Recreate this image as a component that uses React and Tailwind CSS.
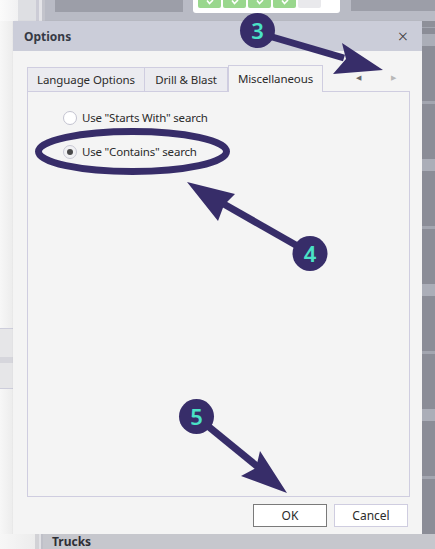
const ui = { fontFamily: '"Noto Sans", "Open Sans", sans-serif' };

function Check() {
  return (
    <svg width="10" height="6" viewBox="0 0 10 6">
      <path d="M2 0.5 L4.5 3.5 L8 0" fill="none" stroke="#fff" strokeWidth="1.6" />
    </svg>
  );
}

function Tile({ done }) {
  return (
    <div
      className={`flex h-[8px] w-[23px] items-start justify-center rounded-b-[2px] ${
        done ? 'bg-[#99d78d]' : 'bg-[#e9e9ec]'
      }`}
    >
      {done && <Check />}
    </div>
  );
}

function TopStrip() {
  return (
    <div className="flex h-[21px] shrink-0">
      <div className="w-[18px] bg-gradient-to-r from-[#fbfbfb] to-[#f1f1f2]" />
      <div className="w-[18px] bg-[#dedfe3]" />
      <div className="w-[3px] bg-[#ccccd6]" />
      <div className="w-[3px] bg-[#e4e4e8]" />
      <div className="w-[3px] bg-[#c3c4cc]" />
      <div className="flex flex-1 items-start bg-[#b9bbc5] pl-[10px]">
        <div className="h-[12px] w-[128px] bg-[#9c9ea8]" />
        <div className="ml-[10px] flex h-[13px] w-[147px] gap-[2px] rounded-b-[3px] bg-white pl-[5px]">
          <Tile done />
          <Tile done />
          <Tile done />
          <Tile done />
          <Tile />
        </div>
        <div className="ml-[11px] h-[11px] flex-1 bg-[#9c9ea8]" />
      </div>
    </div>
  );
}

function LeftStrip() {
  return (
    <div className="flex w-[13px] shrink-0 flex-col bg-gradient-to-r from-[#f7f7f7] to-[#ececec]">
      <div className="h-[307px]" />
      <div className="h-[1px] bg-[#cdcddb]" />
      <div className="h-[28px] bg-[#e6e6e8]" />
      <div className="h-[6px] bg-[#d6d6dc]" />
      <div className="h-[25px] bg-[#e6e6e8]" />
      <div className="h-[1px] bg-[#cdcddb]" />
    </div>
  );
}

function RightStrip() {
  const band = (k) => (
    <div key={k} className="flex flex-col">
      <div className="h-[12px] bg-[#abaeb8]" />
      <div className="h-[55px] bg-[#8b8d97]" />
      <div className="h-[3px] bg-[#a3a6b0]" />
      <div className="h-[55px] bg-[#8b8d97]" />
    </div>
  );
  return (
    <div className="flex w-[13px] shrink-0 flex-col overflow-hidden bg-[#8b8d97]">
      <div className="h-[57px] bg-[#8e9099]" />
      <div className="h-[3px] bg-[#a3a6b0]" />
      <div className="h-[55px] bg-[#8b8d97]" />
      {[0, 1, 2, 3].map(band)}
    </div>
  );
}

function Radio({ checked, label }) {
  return (
    <div className="flex items-center gap-[5px]">
      <span
        className={`flex h-[14px] w-[14px] items-center justify-center rounded-full border ${
          checked ? 'border-[#c9c9d4] bg-[#f1f1f3]' : 'border-[#c3c3d0] bg-white'
        }`}
      >
        {checked && <span className="h-[6px] w-[6px] rounded-full bg-[#4a4a4a]" />}
      </span>
      <span className="text-[11.5px] leading-none tracking-[-0.2px] text-[#2b2b2b]">{label}</span>
    </div>
  );
}

function Dialog() {
  const tab = 'flex items-center justify-center border border-b-0 border-[#cfcde0] text-[11.5px] tracking-[-0.1px] text-[#2b2b2b]';
  return (
    <div className="flex w-[409px] shrink-0 flex-col bg-[#f4f4f4] shadow-[1px_1px_2px_rgba(0,0,0,0.25)]">
      <div className="flex h-[30px] items-center justify-between bg-[#cbcdd9] pl-[11px] pr-[14px]">
        <span className="pt-[2px] text-[12px] font-bold text-[#363a45]">Options</span>
        <span className="text-[18px] font-light leading-none text-[#3a3a3a]">×</span>
      </div>
      <div className="flex flex-1 flex-col pl-[14px] pr-[12px] pt-[14px]">
        <div className="flex h-[26px] items-end">
          <div className={`${tab} h-[24px] w-[118px] bg-[#ebebf0]`}>Language Options</div>
          <div className={`${tab} h-[24px] w-[83px] border-l-0 bg-[#ebebf0]`}>Drill &amp; Blast</div>
          <div className={`${tab} relative z-10 -mb-px h-[27px] w-[95px] bg-[#f4f4f4]`}>Miscellaneous</div>
          <div className="mb-[10px] ml-[33px] flex items-center gap-[30px] text-[7px] leading-none">
            <span className="text-[#6a6a6a]">◀</span>
            <span className="text-[#b8b8b8]">▶</span>
          </div>
        </div>
        <div className="flex h-[406px] flex-col gap-[20px] border border-[#cfcde0] pl-[35px] pt-[19px]">
          <Radio label={'Use "Starts With" search'} />
          <Radio checked label={'Use "Contains" search'} />
        </div>
        <div className="flex justify-end gap-[7px] pr-[2px] pt-[7px]">
          <button className="h-[23px] w-[74px] border border-[#7a7a7a] bg-white text-[12px] text-[#2b2b2b]">
            OK
          </button>
          <button className="h-[23px] w-[74px] border border-[#cfcde0] bg-white text-[12px] text-[#2b2b2b]">
            Cancel
          </button>
        </div>
      </div>
    </div>
  );
}

function BottomStrip() {
  return (
    <div className="flex h-[15px] shrink-0">
      <div className="w-[35px] bg-gradient-to-r from-[#f7f7f7] to-[#ececec]" />
      <div className="w-[4px] bg-[#d2d2d6]" />
      <div className="w-[2px] bg-[#e2e2e6]" />
      <div className="w-[2px] bg-[#bfc0c8]" />
      <div className="flex flex-1 items-start bg-[#c6c7cd] pl-[9px] pt-[1px]">
        <span className="text-[12px] font-bold leading-[14px] text-[#2f2f35]">Trucks</span>
      </div>
    </div>
  );
}

function Marker({ cx, cy, n }) {
  return (
    <g>
      <circle cx={cx} cy={cy} r="17.5" fill="#372d69" />
      <text
        x={cx}
        y={cy + 8}
        textAnchor="middle"
        fontSize="22"
        fontWeight="600"
        fill="#4ae2c6"
        style={{ fontFamily: '"Noto Sans", sans-serif' }}
      >
        {n}
      </text>
    </g>
  );
}

function Annotations() {
  return (
    <svg className="pointer-events-none absolute inset-0" width="435" height="549" viewBox="0 0 435 549">
      <ellipse cx="132.5" cy="151.5" rx="94" ry="20" fill="none" stroke="#372d69" strokeWidth="7" />
      <line x1="262" y1="34" x2="344" y2="58" stroke="#372d69" strokeWidth="7" />
      <polygon points="383,70 342,43 346,59 333,74" fill="#372d69" />
      <line x1="308" y1="252" x2="222" y2="203" stroke="#372d69" strokeWidth="7" />
      <polygon points="187,182 235,194 224,205 218,221" fill="#372d69" />
      <line x1="198" y1="418" x2="258" y2="467" stroke="#372d69" strokeWidth="7" />
      <polygon points="287,493 260,451 256,468 241,476" fill="#372d69" />
      <Marker cx={257.5} cy={30.5} n="3" />
      <Marker cx={310} cy={253.5} n="4" />
      <Marker cx={196.5} cy={416.5} n="5" />
    </svg>
  );
}

export default function App() {
  return (
    <div className="relative flex h-[549px] w-[435px] flex-col overflow-hidden" style={ui}>
      <TopStrip />
      <div className="flex h-[513px] shrink-0">
        <LeftStrip />
        <Dialog />
        <RightStrip />
      </div>
      <BottomStrip />
      <Annotations />
    </div>
  );
}
